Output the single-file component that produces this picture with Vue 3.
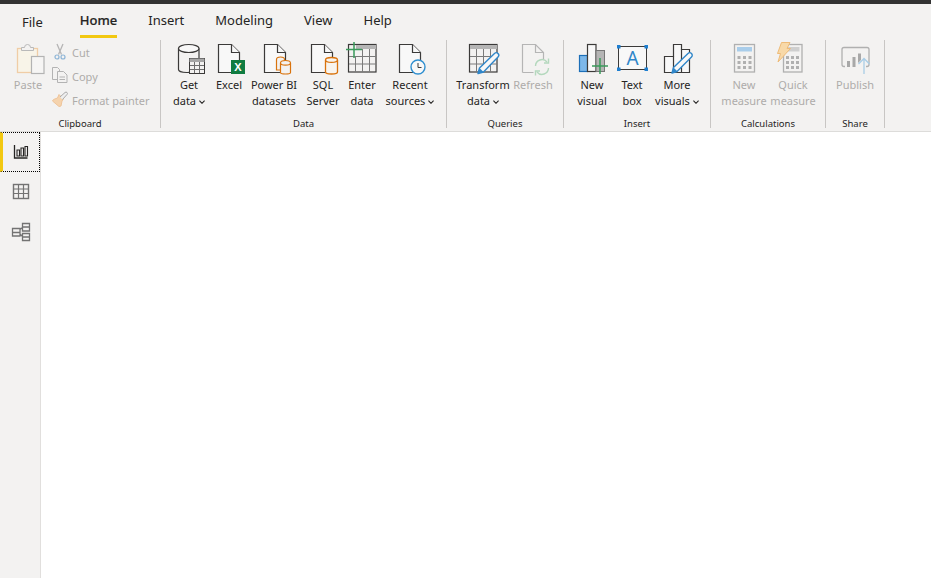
<template>
  <div class="app">
    <div class="titlebar"></div>

    <nav class="tabs">
      <span class="tab file">File</span>
      <span class="tab active">Home</span>
      <span class="tab">Insert</span>
      <span class="tab">Modeling</span>
      <span class="tab">View</span>
      <span class="tab">Help</span>
    </nav>

    <div class="ribbon">
      <!-- Clipboard -->
      <section class="group clipboard">
        <div class="tools">
          <div class="tool off">
            <svg class="icon" viewBox="0 0 40 34">
              <rect x="9.500" y="6.500" width="20" height="24" fill="#f8f4e8" stroke="#f0cda6" stroke-width="1.300" />
              <path d="M13.500 8.500V5.500h3a3 3 0 0 1 6 0h3v3z" fill="#f3f2f1" stroke="#b9b9b9" />
              <rect x="23.500" y="14.500" width="12.500" height="17" fill="#f6f5f4" stroke="#b3b3b3" stroke-width="1.200" />
            </svg>
            <span class="line">Paste</span>
          </div>
          <div class="small-tools">
            <div class="small off">
              <svg class="small-icon" viewBox="0 0 16 18">
                <path d="M5 1l4.500 10.500M11 1L6.500 11.500" fill="none" stroke="#b5b5b5" stroke-width="1.300" />
                <circle cx="5" cy="14" r="2" fill="none" stroke="#8db4d6" stroke-width="1.200" />
                <circle cx="11" cy="14" r="2" fill="none" stroke="#8db4d6" stroke-width="1.200" />
              </svg>
              <span>Cut</span>
            </div>
            <div class="small off">
              <svg class="small-icon" viewBox="0 0 16 18">
                <path d="M5.500 12.500H.5v-12h5l2 2v2" fill="none" stroke="#b3b3b3" />
                <path d="M5.500 4.500h6l3.500 3.500v7.500h-9.500z" fill="#f3f2f1" stroke="#b3b3b3" />
                <path d="M7.500 10h5.500M7.500 12.500h5.500" stroke="#b3b3b3" />
              </svg>
              <span>Copy</span>
            </div>
            <div class="small off">
              <svg class="small-icon" viewBox="0 0 16 18">
                <path d="M7 3.500l4.500 4.500-1.500 2-1 5-2 .5L.5 10l1-1.500 4-1.500z" fill="#f5d3ad" stroke="#eec49a" />
                <path d="M8 6l5-4.500a1.400 1.400 0 0 1 2 2L10.500 8.500" fill="#eee" stroke="#aaa" />
              </svg>
              <span>Format painter</span>
            </div>
          </div>
        </div>
        <div class="group-name">Clipboard</div>
      </section>

      <!-- Data -->
      <section class="group data">
        <div class="tools">
          <div class="tool">
            <svg class="icon" viewBox="0 0 40 34">
              <path d="M9.500 6.500v21c0 1.500 3 3 8 3 1 0 2-.1 2.500-.2M30 6.500V16" fill="none" stroke="#3b3a39" stroke-width="1.200" />
              <ellipse cx="19.750" cy="6.500" rx="10.250" ry="4" fill="#f8f8f8" stroke="#3b3a39" stroke-width="1.200" />
              <rect x="20.500" y="16.500" width="15" height="15" fill="#f3f2f1" stroke="#3b3a39" />
              <rect x="20.500" y="16.500" width="15" height="3.500" fill="#a6a6a6" />
              <path d="M25.500 20v11M30.500 20v11M21 23.500h14M21 27.500h14" stroke="#6e6e6e" />
            </svg>
            <span class="line">Get</span>
            <span class="line">data<svg class="chev" viewBox="0 0 7 4"><path d="M.5.500l3 3 3-3" /></svg></span>
          </div>
          <div class="tool">
            <svg class="icon" viewBox="0 0 40 34">
              <path class="doc" d="M9.500 30.500v-28h13l8 8v20z" />
              <path class="doc" d="M22.500 2.500v8h8" />
              <rect x="22" y="18" width="14" height="14" fill="#107c41" />
              <text x="29" y="29" class="xl">X</text>
            </svg>
            <span class="line">Excel</span>
          </div>
          <div class="tool">
            <svg class="icon" viewBox="0 0 40 34">
              <path class="doc" d="M10.500 30.500v-28h13l8 8v20z" />
              <path class="doc" d="M23.500 2.500v8h8" />
              <path d="M22.500 17.500c0-1.500 2-2.500 4-2.500s4 1 4 2.500V28h-8z" fill="#f3f2f1" stroke="#d9730d" stroke-width="1.200" />
              <path d="M26.500 21c0-1.500 2-2.500 5-2.500s5 1 5 2.500v9.500c0 1-2 1.500-5 1.500s-5-.5-5-1.500z" fill="#f3f2f1" stroke="#d9730d" stroke-width="1.200" />
              <path d="M26.500 21c0 1.300 2 2.200 5 2.200s5-.9 5-2.200" fill="none" stroke="#d9730d" stroke-width="1.200" />
            </svg>
            <span class="line">Power BI</span>
            <span class="line">datasets</span>
          </div>
          <div class="tool">
            <svg class="icon" viewBox="0 0 40 34">
              <path class="doc" d="M8.500 30.500v-28h13l8 8v20z" />
              <path class="doc" d="M21.500 2.500v8h8" />
              <path d="M22.500 18c0-1.500 3-2.500 6-2.500s6 1 6 2.500v12c0 1.200-3 2-6 2s-6-.8-6-2z" fill="#f8f4ee" stroke="#d9730d" stroke-width="1.300" />
              <path d="M22.500 18c0 1.400 3 2.400 6 2.400s6-1 6-2.400" fill="none" stroke="#d9730d" stroke-width="1.300" />
            </svg>
            <span class="line">SQL</span>
            <span class="line">Server</span>
          </div>
          <div class="tool">
            <svg class="icon" viewBox="0 0 40 34">
              <rect x="6.500" y="2.500" width="27.500" height="27.500" fill="#f3f2f1" stroke="#3b3a39" stroke-width="1.200" />
              <rect x="14" y="3" width="20" height="4" fill="#b5b5b5" />
              <path d="M13.500 14.500v15.500M20.500 7v23M27.500 7v23M7 14.500h27M7 22h27" stroke="#7a7a7a" />
              <path d="M4 7.500h16M12 0v16" stroke="#3a9a5b" stroke-width="1.500" />
            </svg>
            <span class="line">Enter</span>
            <span class="line">data</span>
          </div>
          <div class="tool">
            <svg class="icon" viewBox="0 0 40 34">
              <path class="doc" d="M9.500 30.500v-28h13l8 8v20z" />
              <path class="doc" d="M22.500 2.500v8h8" />
              <circle cx="28" cy="25" r="7" fill="#f8f8f8" stroke="#2f8fd0" stroke-width="1.400" />
              <path d="M28 21v4.500h3.500" fill="none" stroke="#3b3a39" />
            </svg>
            <span class="line">Recent</span>
            <span class="line">sources<svg class="chev" viewBox="0 0 7 4"><path d="M.5.500l3 3 3-3" /></svg></span>
          </div>
        </div>
        <div class="group-name">Data</div>
      </section>

      <!-- Queries -->
      <section class="group queries">
        <div class="tools">
          <div class="tool">
            <svg class="icon" viewBox="0 0 40 34">
              <rect x="6.500" y="2.500" width="27.500" height="27.500" fill="#f3f2f1" stroke="#3b3a39" stroke-width="1.200" />
              <rect x="7" y="3" width="27" height="4" fill="#b5b5b5" />
              <path d="M13.500 7v23M20.500 7v23M27.500 7v23M7 14.500h27M7 22h27" stroke="#7a7a7a" />
              <path d="M15 31.500l1.500-5.500L31.500 11.500a2 2 0 0 1 3.500 3.500L20.500 30z" fill="#f8f8f8" stroke="#2f86c9" stroke-width="1.400" stroke-linejoin="round" />
              <path d="M15 31.500l1.500-5.500 4 4z" fill="#2f86c9" />
            </svg>
            <span class="line">Transform</span>
            <span class="line">data<svg class="chev" viewBox="0 0 7 4"><path d="M.5.500l3 3 3-3" /></svg></span>
          </div>
          <div class="tool off">
            <svg class="icon" viewBox="0 0 40 34">
              <path class="doc-off" d="M9.500 30.500v-28h13l8 8v7" />
              <path class="doc-off" d="M9.500 30.500h11M22.500 2.500v8h8" />
              <path d="M22.500 24a6.500 6.500 0 0 1 11.500-4M35.500 26a6.500 6.500 0 0 1-11.500 4" fill="none" stroke="#b4d8bd" stroke-width="1.400" />
              <path d="M35.500 16.500V21H31M22.500 33.500V29H27" fill="none" stroke="#b4d8bd" stroke-width="1.400" />
            </svg>
            <span class="line">Refresh</span>
          </div>
        </div>
        <div class="group-name">Queries</div>
      </section>

      <!-- Insert -->
      <section class="group insert">
        <div class="tools">
          <div class="tool">
            <svg class="icon" viewBox="0 0 40 34">
              <rect x="7.500" y="13.500" width="8" height="16" fill="#7db8ea" stroke="#1c6fb8" stroke-width="1.200" />
              <rect x="15.500" y="2.500" width="8.500" height="27" fill="#f8f8f8" stroke="#3b3a39" stroke-width="1.200" />
              <rect x="24" y="8.500" width="8.500" height="21" fill="#b5b5b5" stroke="#777" />
              <path d="M20 24h16M28 16v16" stroke="#3a9a5b" stroke-width="1.500" />
            </svg>
            <span class="line">New</span>
            <span class="line">visual</span>
          </div>
          <div class="tool">
            <svg class="icon" viewBox="0 0 40 34">
              <rect x="6.500" y="4.500" width="28" height="23" fill="#f8f8f8" stroke="#3b3a39" />
              <rect x="5" y="3" width="3.500" height="3.500" fill="#1f7fd0" />
              <rect x="32.500" y="3" width="3.500" height="3.500" fill="#1f7fd0" />
              <rect x="5" y="25.500" width="3.500" height="3.500" fill="#1f7fd0" />
              <rect x="32.500" y="25.500" width="3.500" height="3.500" fill="#1f7fd0" />
              <text x="20.500" y="23" class="letter">A</text>
            </svg>
            <span class="line">Text</span>
            <span class="line">box</span>
          </div>
          <div class="tool">
            <svg class="icon" viewBox="0 0 40 34">
              <path d="M7.500 30.500v-16h9v-12h8v5h8v23z" fill="#f8f8f8" stroke="#3b3a39" stroke-width="1.200" />
              <path d="M16.500 14.500v16M24.500 7.500v23" stroke="#3b3a39" stroke-width="1.200" fill="none" />
              <path d="M15 31l1.500-5.500L31 11.500a2 2 0 0 1 3.500 3.500L20 29.500z" fill="#f8f8f8" stroke="#2f86c9" stroke-width="1.400" stroke-linejoin="round" />
              <path d="M15 31l1.500-5.500 3.800 3.800z" fill="#2f86c9" />
            </svg>
            <span class="line">More</span>
            <span class="line">visuals<svg class="chev" viewBox="0 0 7 4"><path d="M.5.500l3 3 3-3" /></svg></span>
          </div>
        </div>
        <div class="group-name">Insert</div>
      </section>

      <!-- Calculations -->
      <section class="group calculations">
        <div class="tools">
          <div class="tool off">
            <svg class="icon" viewBox="0 0 40 34">
              <rect x="10.500" y="2.500" width="20" height="27.500" fill="#f3f2f1" stroke="#b0b0b0" stroke-width="1.300" />
              <rect x="13" y="5" width="15" height="4.500" fill="#a9cdea" />
              <path d="M13.500 14h3v3h-3zM19 14h3v3h-3zM24.500 14h3v3h-3zM13.500 19h3v3h-3zM19 19h3v3h-3zM24.500 19h3v3h-3zM13.500 24h3v3h-3zM19 24h3v3h-3zM24.500 24h3v3h-3z" fill="#b0b0b0" />
            </svg>
            <span class="line">New</span>
            <span class="line">measure</span>
          </div>
          <div class="tool off">
            <svg class="icon" viewBox="0 0 40 34">
              <rect x="10.500" y="2.500" width="18.500" height="27.500" fill="#f3f2f1" stroke="#b0b0b0" stroke-width="1.300" />
              <rect x="13" y="5" width="13.500" height="4.500" fill="#cfcfcf" />
              <path d="M13 14h3v3h-3zM18 14h3v3h-3zM23 14h3v3h-3zM13 19h3v3h-3zM18 19h3v3h-3zM23 19h3v3h-3zM13 24h3v3h-3zM18 24h3v3h-3zM23 24h3v3h-3z" fill="#b0b0b0" />
              <path d="M8.500.5h8.500l-3 6h3.500L5 20l2.500-8.500H4.500z" fill="#f8d9a8" stroke="#eebb78" />
            </svg>
            <span class="line">Quick</span>
            <span class="line">measure</span>
          </div>
        </div>
        <div class="group-name">Calculations</div>
      </section>

      <!-- Share -->
      <section class="group share">
        <div class="tools">
          <div class="tool off">
            <svg class="icon" viewBox="0 0 40 34">
              <path d="M10 24.500H9a2 2 0 0 1-2-2V7.500a2 2 0 0 1 2-2h23a2 2 0 0 1 2 2v15a2 2 0 0 1-2 2h-1" fill="none" stroke="#b0b0b0" stroke-width="1.300" />
              <path d="M12 19h3v6h-3zM17.500 15h3v10h-3zM23 11.500h3V18l-3 3z" fill="#a8a8a8" />
              <path d="M29 32V17M23.500 22l5.500-5.500 5.500 5.500" fill="none" stroke="#a9cde6" stroke-width="1.300" />
            </svg>
            <span class="line">Publish</span>
          </div>
        </div>
        <div class="group-name">Share</div>
      </section>
    </div>

    <div class="body">
      <aside class="sidebar">
        <div class="view current">
          <svg class="view-icon" viewBox="0 0 18 18">
            <path d="M2.500 2v13h13" fill="none" stroke="#252423" stroke-width="1.300" />
            <path d="M5 7h2.500v6H5zM9 5h2.500v8H9zM13 3.500h2.500V13H13z" fill="none" stroke="#252423" stroke-width="1.100" />
          </svg>
        </div>
        <div class="view">
          <svg class="view-icon" viewBox="0 0 18 18">
            <rect x="1.500" y="1.500" width="15" height="14" fill="none" stroke="#737373" stroke-width="1.400" />
            <path d="M1.500 6h15M1.500 10.500h15M6.500 1.500v14M11.500 1.500v14" stroke="#737373" stroke-width="1.200" />
          </svg>
        </div>
        <div class="view">
          <svg class="view-icon" viewBox="0 0 18 18">
            <path d="M.5 5.500h7.500v7.500H.5zM.5 9.500h7.500M10.500.5h7v7.500h-7zM10.500 4h7M10.500 10.500h7v7h-7zM10.500 14h7M8 6.500l2.500-2M8 11l2.500 2.500" fill="none" stroke="#737373" stroke-width="1.300" />
          </svg>
        </div>
      </aside>
      <main class="canvas"></main>
    </div>
  </div>
</template>

<script setup>
</script>

<style>
html,
body {
  margin: 0;
  height: 100%;
  background: #fff;
}
</style>

<style scoped>
.app {
  display: flex;
  flex-direction: column;
  height: 100vh;
  overflow: hidden;
  font-family: "Noto Sans", "Open Sans", sans-serif;
  font-size: 11px;
  color: #252423;
  background: #f3f2f1;
}
.titlebar {
  height: 4px;
  background: #333;
}
.tabs {
  display: flex;
  height: 34px;
  padding-left: 22px;
  gap: 31px;
  font-size: 13px;
}
.tab {
  line-height: 32px;
  height: 31px;
}
.tab.file {
  margin-right: 6px;
  line-height: 37px;
}
.tab.active {
  font-weight: 500;
  -webkit-text-stroke: 0.2px #252423;
  border-bottom: 3px solid #f2c811;
}
.ribbon {
  display: flex;
  height: 94px;
  box-sizing: border-box;
  padding: 2px 0 3px;
  border-bottom: 1px solid #dddcda;
}
.group {
  display: flex;
  flex-direction: column;
  box-sizing: border-box;
  border-right: 1px solid #c8c6c4;
}
.clipboard { width: 161px; }
.data { width: 286px; }
.queries { width: 117px; }
.insert { width: 147px; }
.calculations { width: 115px; }
.share { width: 59px; }

.tools {
  flex: 1;
  display: grid;
  grid-auto-flow: column;
  padding-top: 2px;
  padding-left: 8px;
}
.clipboard .tools { grid-template-columns: 40px 1fr; }
.data .tools { grid-template-columns: 40px 40px 50px 48px 30px 66px; justify-content: start; }
.queries .tools { grid-template-columns: 52px 48px; justify-content: start; padding-left: 10px; }
.insert .tools { grid-template-columns: 40px 40px 50px; justify-content: start; }
.calculations .tools { grid-template-columns: 50px 48px; justify-content: start; }
.share .tools { grid-template-columns: 40px; padding-left: 9px; }

.tool {
  display: flex;
  flex-direction: column;
  align-items: center;
  white-space: nowrap;
}
.icon {
  flex: none;
  width: 40px;
  height: 34px;
  margin-bottom: 1px;
  overflow: visible;
}
.line {
  line-height: 16px;
}
.off {
  color: #aeacaa;
}
.group-name {
  height: 14px;
  margin-bottom: -3px;
  line-height: 14px;
  font-size: 9.5px;
  text-align: center;
}
.small-tools {
  margin-top: -2px;
  margin-left: 4px;
}
.small {
  display: flex;
  align-items: center;
  gap: 4px;
  height: 24px;
  white-space: nowrap;
}
.small-icon {
  width: 16px;
  height: 18px;
}
.chev {
  width: 6px;
  height: 4px;
  margin-left: 3px;
  vertical-align: 1px;
}
.chev path {
  fill: none;
  stroke: #252423;
  stroke-width: 1.3;
}
.doc {
  fill: #f8f8f8;
  stroke: #3b3a39;
  stroke-width: 1.2;
}
.doc-off {
  fill: none;
  stroke: #b5b5b5;
  stroke-width: 1.2;
}
.xl {
  font-family: "Liberation Sans", sans-serif;
  font-size: 11px;
  font-weight: 700;
  fill: #fff;
  text-anchor: middle;
}
.letter {
  font-family: "Noto Sans", sans-serif;
  font-size: 19px;
  fill: #2f86c9;
  text-anchor: middle;
}
.body {
  flex: 1;
  display: flex;
  min-height: 0;
}
.sidebar {
  width: 41px;
  box-sizing: border-box;
  border-right: 1px solid #e1dfdd;
}
.view {
  display: flex;
  align-items: center;
  justify-content: center;
  height: 40px;
  width: 40px;
  padding-left: 2px;
  box-sizing: border-box;
}
.view.current {
  border: 1px dotted #000;
  border-left: 3px solid #f2c811;
  padding-left: 0;
}
.view-icon {
  width: 18px;
  height: 18px;
  overflow: visible;
}
.canvas {
  flex: 1;
  background: #fff;
}
</style>
